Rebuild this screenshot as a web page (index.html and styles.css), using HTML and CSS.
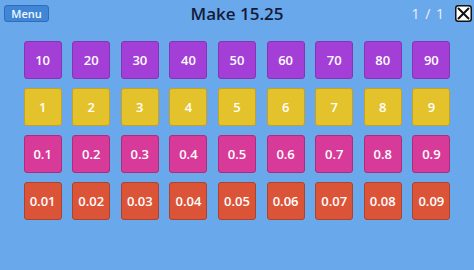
FILE: index.html
```html
<!DOCTYPE html>
<html lang="en">
<head>
  <meta charset="UTF-8">
  <title>Make 15.25</title>
  <link rel="stylesheet" href="styles.css">
</head>
<body>
<div class="header">
  <button class="menu">Menu</button>
  <h1 class="title">Make 15.25</h1>
  <div class="right">
    <span class="count">1 / 1</span>
    <span class="close">
      <svg width="17" height="17" viewBox="0 0 17 17">
        <rect x="0.75" y="0.75" width="15.5" height="15.5" rx="2.5" fill="#fff" stroke="#111" stroke-width="1.5"/>
        <path d="M3.5 3.5 L13.5 13.5 M13.5 3.5 L3.5 13.5" stroke="#111" stroke-width="2" stroke-linecap="round"/>
      </svg>
    </span>
  </div>
</div>

<!-- number tiles -->
<div class="grid">
  <div class="tile tens">10</div>
  <div class="tile tens">20</div>
  <div class="tile tens">30</div>
  <div class="tile tens">40</div>
  <div class="tile tens">50</div>
  <div class="tile tens">60</div>
  <div class="tile tens">70</div>
  <div class="tile tens">80</div>
  <div class="tile tens">90</div>

  <div class="tile ones">1</div>
  <div class="tile ones">2</div>
  <div class="tile ones">3</div>
  <div class="tile ones">4</div>
  <div class="tile ones">5</div>
  <div class="tile ones">6</div>
  <div class="tile ones">7</div>
  <div class="tile ones">8</div>
  <div class="tile ones">9</div>

  <div class="tile tenths">0.1</div>
  <div class="tile tenths">0.2</div>
  <div class="tile tenths">0.3</div>
  <div class="tile tenths">0.4</div>
  <div class="tile tenths">0.5</div>
  <div class="tile tenths">0.6</div>
  <div class="tile tenths">0.7</div>
  <div class="tile tenths">0.8</div>
  <div class="tile tenths">0.9</div>

  <div class="tile hundredths">0.01</div>
  <div class="tile hundredths">0.02</div>
  <div class="tile hundredths">0.03</div>
  <div class="tile hundredths">0.04</div>
  <div class="tile hundredths">0.05</div>
  <div class="tile hundredths">0.06</div>
  <div class="tile hundredths">0.07</div>
  <div class="tile hundredths">0.08</div>
  <div class="tile hundredths">0.09</div>
</div>
</body>
</html>
```

FILE: styles.css
```css
body {
  margin: 0;
  width: 474px;
  height: 270px;
  background: #6aa8ec;
  font-family: "Open Sans", "Noto Sans", sans-serif;
  overflow: hidden;
}
.header {
  position: relative;
  display: flex;
  align-items: center;
  justify-content: space-between;
  height: 26px;
  padding: 0 2px 0 4px;
}
.menu {
  width: 45px;
  height: 17px;
  margin-top: 1px;
  padding: 0;
  background: #3f86d6;
  border: 1px solid #2f6db8;
  border-radius: 3px;
  color: #f4f8ff;
  font-family: "Open Sans", sans-serif;
  font-size: 11px;
  font-weight: 600;
  line-height: 15px;
}
.title {
  position: absolute;
  left: 0;
  right: 0;
  top: 2px;
  margin: 0;
  text-align: center;
  font-size: 17px;
  font-weight: 600;
  color: #141b3a;
  line-height: 24px;
  pointer-events: none;
}
.right {
  display: flex;
  align-items: center;
  gap: 10px;
}
.count {
  color: #e8f0fc;
  font-size: 14px;
  letter-spacing: 1px;
}
.close {
  display: flex;
}
/* tiles */
.grid {
  display: grid;
  grid-template-columns: repeat(9, 38px);
  grid-auto-rows: 38px;
  column-gap: 10.6px;
  row-gap: 9px;
  justify-content: center;
  margin-top: 15px;
}
.tile {
  display: flex;
  align-items: center;
  justify-content: center;
  box-sizing: border-box;
  border: 1.5px solid;
  border-radius: 3px;
  color: #fff;
  font-size: 13px;
  font-weight: 600;
}
.tens {
  background: #a33fd6;
  border-color: #8634b2;
}
.ones {
  background: #e4c22b;
  border-color: #c0a22a;
}
.tenths {
  background: #d73a99;
  border-color: #ab2d7c;
}
.hundredths {
  background: #db5438;
  border-color: #aa432f;
}
```
